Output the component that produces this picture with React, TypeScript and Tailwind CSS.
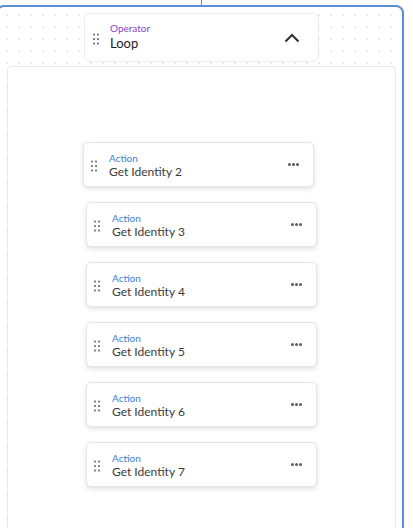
import React from "react";

const actions = [2, 3, 4, 5, 6, 7];

function Grip() {
  return (
    <svg width="6" height="12" viewBox="0 0 6 12" className="flex-shrink-0">
      {[1, 5].map((x) =>
        [1.5, 6, 10.5].map((y) => <circle key={`${x}-${y}`} cx={x} cy={y} r="1.1" fill="#6b7280" />)
      )}
    </svg>
  );
}

function ActionCard({ n, first }: { n: number; first: boolean }) {
  return (
    <div
      className={`w-[231px] h-[45px] flex items-center bg-white border border-[#e6e6e6] rounded-[5px] shadow-[0_2px_5px_rgba(0,0,0,0.12)] ${
        first ? "-translate-x-[3px]" : ""
      }`}
    >
      <div className="pl-[7px] pr-[12px] pt-[2px]">
        <Grip />
      </div>
      <div className="flex-1 flex flex-col pt-[2px]">
        <span className="text-[10px] leading-[12px] text-[#3b82d6]">Action</span>
        <span className="text-[12px] leading-[14px] mt-[1px] text-[#3a3a3a]">Get Identity {n}</span>
      </div>
      <div className="pr-[14px] flex gap-[1px]">
        {[0, 1, 2].map((i) => (
          <span key={i} className="w-[3px] h-[3px] rounded-full bg-[#5a5a5a]" />
        ))}
      </div>
    </div>
  );
}

export default function App() {
  return (
    <div
      className="w-[413px] h-[528px] overflow-hidden bg-white"
      style={{ fontFamily: 'Lato, "Noto Sans", sans-serif' }}
    >
      <div className="ml-[201px] w-px h-[5px] bg-[#888]" />
      <div className="-ml-[4px] w-[408px] h-[560px] border-2 border-[#5a8ed8] rounded-[8px] bg-[radial-gradient(circle,#e2e2e2_0.6px,transparent_1px)] bg-[length:12px_12px] bg-[position:3px_2px] flex flex-col">
        <div className="pt-[6px] flex justify-center">
          <div className="w-[235px] h-[49px] ml-[3px] flex items-center bg-white border border-[#ececec] rounded-[6px]">
            <div className="pl-[8px] pr-[11px] pt-[2px]">
              <Grip />
            </div>
            <div className="flex-1 flex flex-col -mt-[2px]">
              <span className="text-[10px] leading-[12px] text-[#8a3fcf]">Operator</span>
              <span className="text-[13px] leading-[16px] mt-[1px] text-[#222]">Loop</span>
            </div>
            <svg width="16" height="10" viewBox="0 0 16 10" className="mr-[18px]">
              <path d="M1.5 8.5 L8 2 L14.5 8.5" fill="none" stroke="#333" strokeWidth="2" />
            </svg>
          </div>
        </div>
        <div className="mt-[4px] ml-[9px] mr-[6px] flex-1 bg-white border border-[#e8e8e8] rounded-[4px] pt-[75px] flex flex-col items-center gap-[15px]">
          {actions.map((n, i) => (
            <ActionCard key={n} n={n} first={i === 0} />
          ))}
        </div>
      </div>
    </div>
  );
}
